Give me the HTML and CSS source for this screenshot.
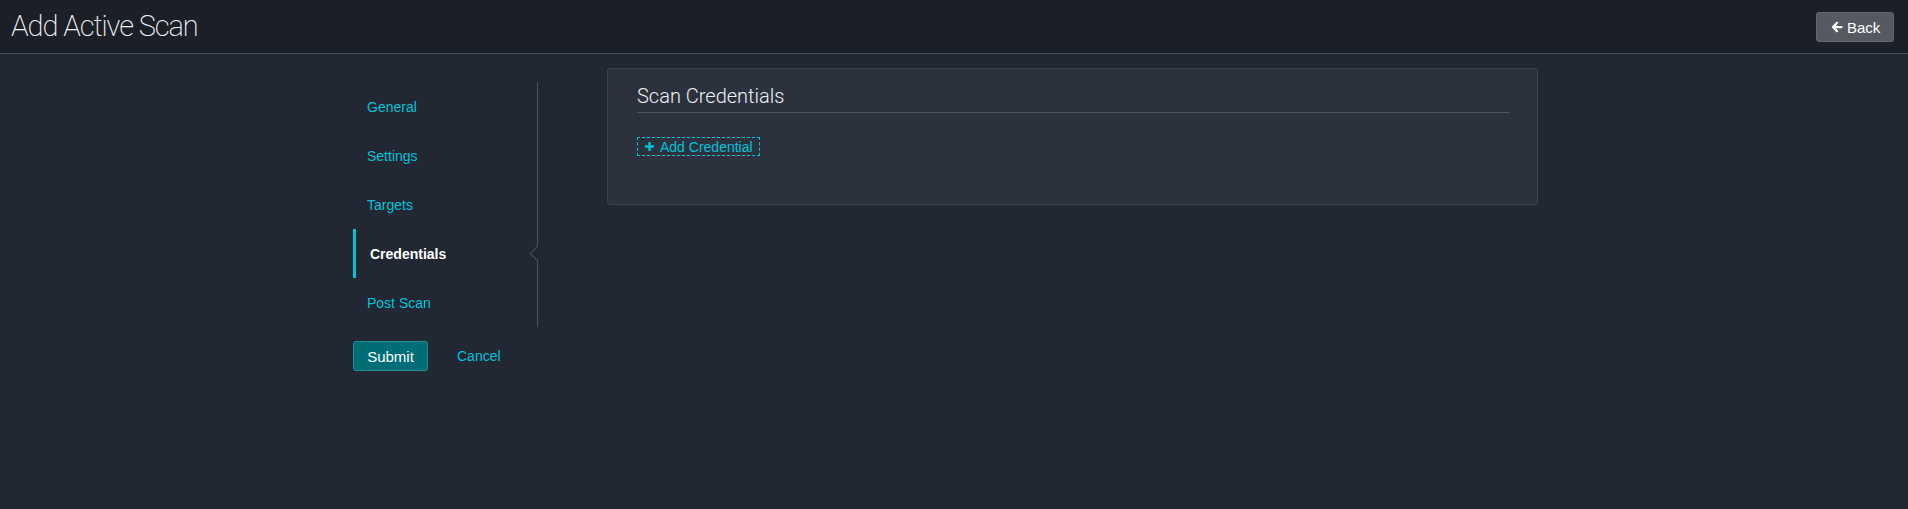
FILE: index.html
```html
<!DOCTYPE html>
<html lang="en">
<head>
  <meta charset="UTF-8" />
  <meta name="viewport" content="width=device-width, initial-scale=1.0"/>
  <title>Add Active Scan</title>
  <link rel="stylesheet" href="styles.css">
</head>
<body>

  <!-- Header -->
  <header class="page-header">
    <h1>Add Active Scan</h1>
    <button class="back-btn">
      <svg class="back-icon" viewBox="0 0 16 16" width="12" height="12">
        <path d="M8 2.5 L2.8 8 L8 13.5 M3.2 8 H14" fill="none" stroke="#fff" stroke-width="3" stroke-linecap="round" stroke-linejoin="round"/>
      </svg>
      Back
    </button>
  </header>

  <!-- Wizard -->
  <div class="wizard">
    <div class="wizard-side">
      <nav class="steps">
        <a href="#">General</a>
        <a href="#">Settings</a>
        <a href="#">Targets</a>
        <a href="#" class="active">Credentials</a>
        <a href="#">Post Scan</a>
      </nav>
      <div class="actions">
        <button class="submit-btn">Submit</button>
        <a href="#" class="cancel-link">Cancel</a>
      </div>
    </div>

    <section class="panel">
      <h2>Scan Credentials</h2>
      <a href="#" class="add-link">
        <svg viewBox="0 0 12 12" width="11" height="11">
          <path d="M6 1 V11 M1 6 H11" stroke="#00c4d8" stroke-width="2.6"/>
        </svg>
        Add Credential
      </a>
    </section>
  </div>

</body>
</html>
```

FILE: styles.css
```css
* {
  box-sizing: border-box;
}

body {
  margin: 0;
  height: 100vh;
  background: #212733;
  font-family: "Liberation Sans", Arial, sans-serif;
  color: #fff;
}

a {
  text-decoration: none;
}

/* Header */
.page-header {
  height: 54px;
  background: #1b1f28;
  border-bottom: 1px solid #4b5058;
  display: flex;
  align-items: center;
  justify-content: space-between;
  padding: 0 14px 0 11px;
}

.page-header h1 {
  margin: 0 0 1px;
  font-family: Roboto, sans-serif;
  font-weight: 200;
  font-size: 29px;
  letter-spacing: -1.1px;
  color: #eef0f2;
}

.back-btn {
  display: flex;
  align-items: center;
  gap: 4px;
  width: 78px;
  height: 30px;
  margin-top: 1px;
  padding: 0 0 0 14px;
  background: #555a62;
  border: 1px solid #62676e;
  border-radius: 3px;
  color: #fff;
  font-family: "Liberation Sans", Arial, sans-serif;
  font-size: 15px;
}

/* Wizard layout */
.wizard {
  display: flex;
  align-items: flex-start;
  padding: 14px 0 0 353px;
}

.wizard-side {
  width: 185px;
  margin-top: 14px;
}

.steps {
  border-right: 1px solid #4d525a;
}

.steps a {
  position: relative;
  display: block;
  height: 49px;
  line-height: 51px;
  padding-left: 14px;
  font-size: 14px;
  color: #00c4d8;
}

.steps a.active {
  border-left: 3px solid #00c4d8;
  color: #fff;
  font-weight: bold;
}

/* little notch on the rail */
.steps a.active::after {
  content: "";
  position: absolute;
  right: -6px;
  top: 19px;
  width: 10px;
  height: 10px;
  background: #212733;
  border-left: 1px solid #4d525a;
  border-bottom: 1px solid #4d525a;
  transform: rotate(45deg);
}

.actions {
  display: flex;
  align-items: center;
  margin-top: 14px;
}

.submit-btn {
  width: 75px;
  height: 30px;
  background: #006c76;
  border: 1px solid #15939e;
  border-radius: 3px;
  color: #fff;
  font-family: "Liberation Sans", Arial, sans-serif;
  font-size: 15px;
}

.cancel-link {
  margin-left: 29px;
  font-size: 14px;
  color: #00c4d8;
}

/* Panel */
.panel {
  width: 931px;
  height: 137px;
  margin-left: 69px;
  padding: 15px 28px 0 29px;
  background: #2b323d;
  border: 1px solid #3c424c;
  border-radius: 3px;
}

.panel h2 {
  margin: 0;
  padding-bottom: 4px;
  border-bottom: 1px solid #4f555d;
  font-family: Roboto, sans-serif;
  font-weight: 300;
  font-size: 20px;
  color: #eef0f2;
}

.add-link {
  display: inline-flex;
  align-items: center;
  gap: 5px;
  height: 19px;
  margin-top: 24px;
  padding: 0 6px 0 6px;
  border: 1px dashed #00c4d8;
  font-size: 14px;
  color: #00c4d8;
}
```
